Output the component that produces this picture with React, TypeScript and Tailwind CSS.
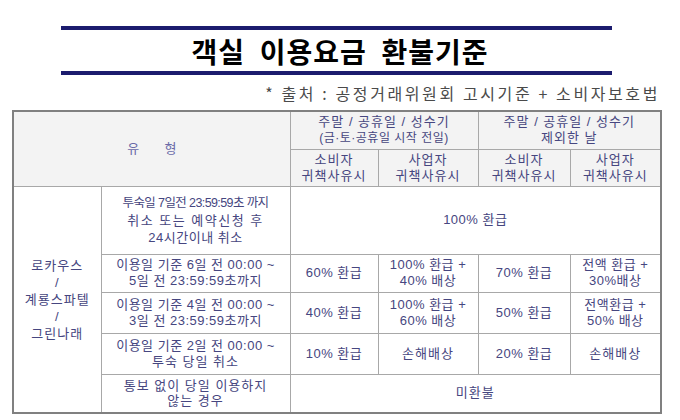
import React from "react";

const font = { fontFamily: '"Noto Sans CJK KR", "Noto Sans", sans-serif' };
const tableFont = { fontFamily: '"Liberation Sans", "Noto Sans CJK KR", sans-serif' };

const td = "border border-[#a8a8a8] text-center align-middle p-0";

export default function App() {
  return (
    <div className="w-[680px] h-[420px] bg-white overflow-hidden text-[#464680]" style={font}>
      <div className="pt-[26px]">
        <div className="ml-[61px] w-[551px] h-[4px] bg-[#1c1c6e]" />
        <div className="h-[41px] flex items-center justify-center text-black text-[28px] font-bold tracking-[1px] leading-none">
          객실&nbsp; 이용요금&nbsp; 환불기준
        </div>
        <div className="ml-[61px] w-[551px] h-[4px] bg-[#1c1c6e]" />
        <div className="h-[35px] flex items-center justify-end pr-[20px] text-[16px] text-[#4a4a4a] tracking-[2.6px]">
          *&nbsp;출처&nbsp;:&nbsp;공정거래위원회&nbsp;고시기준&nbsp;+&nbsp;소비자보호법
        </div>
      </div>
      <table
        className="ml-[12px] w-[648px] border-collapse border-2 border-[#808080] text-[13px] leading-[16px] table-fixed"
        style={tableFont}
      >
        <colgroup>
          <col className="w-[88px]" />
          <col className="w-[189px]" />
          <col className="w-[88px]" />
          <col className="w-[100px]" />
          <col className="w-[92px]" />
          <col className="w-[91px]" />
        </colgroup>
        <tbody>
          <tr className="h-[38px] bg-[#f3f3f3]">
            <td colSpan={2} rowSpan={2} className={`${td} text-[13px] text-[#6a6aa8]`}>
              유&nbsp;&nbsp;&nbsp;&nbsp;&nbsp;&nbsp;&nbsp;형
            </td>
            <td colSpan={2} className={td}>
              <div className="text-[13px] tracking-[1px]">주말 / 공휴일 / 성수기</div>
              <div className="text-[12px] tracking-[0.5px]">(금·토·공휴일 시작 전일)</div>
            </td>
            <td colSpan={2} className={td}>
              <div className="text-[13px] tracking-[1px]">주말 / 공휴일 / 성수기</div>
              <div className="text-[13px] tracking-[1px]">제외한 날</div>
            </td>
          </tr>
          <tr className="h-[37px] bg-[#f3f3f3] text-[13px] tracking-[1px]">
            <td className={td}>소비자<br />귀책사유시</td>
            <td className={td}>사업자<br />귀책사유시</td>
            <td className={td}>소비자<br />귀책사유시</td>
            <td className={td}>사업자<br />귀책사유시</td>
          </tr>
          <tr className="h-[68px]">
            <td rowSpan={5} className={`${td} text-[13px] leading-[17px] tracking-[1px]`}>
              로카우스<br />/<br />계룡스파텔<br />/<br />그린나래
            </td>
            <td className={`${td} leading-[17px]`}>
              <div className="tracking-[-0.6px] text-[12.5px]">투숙일 7일전 23:59:59초 까지</div>
              <div className="tracking-[1.5px]">취소 또는 예약신청 후</div>
              <div className="tracking-[0.5px]">24시간이내 취소</div>
            </td>
            <td colSpan={4} className={`${td} tracking-[0.5px]`}>100% 환급</td>
          </tr>
          <tr className="h-[38px]">
            <td className={td}>
              <div className="tracking-[0.5px]">이용일 기준 6일 전 00:00 ~</div>
              <div className="tracking-[0.5px]">5일 전 23:59:59초까지</div>
            </td>
            <td className={`${td} tracking-[0.5px]`}>60% 환급</td>
            <td className={`${td} tracking-[0.5px]`}>100% 환급 +<br />40% 배상</td>
            <td className={`${td} tracking-[0.5px]`}>70% 환급</td>
            <td className={`${td} tracking-[0.5px]`}>전액 환급 +<br />30%배상</td>
          </tr>
          <tr className="h-[41px]">
            <td className={td}>
              <div className="tracking-[0.5px]">이용일 기준 4일 전 00:00 ~</div>
              <div className="tracking-[0.5px]">3일 전 23:59:59초까지</div>
            </td>
            <td className={`${td} tracking-[0.5px]`}>40% 환급</td>
            <td className={`${td} tracking-[0.5px]`}>100% 환급 +<br />60% 배상</td>
            <td className={`${td} tracking-[0.5px]`}>50% 환급</td>
            <td className={`${td} tracking-[0.5px]`}>전액환급 +<br />50% 배상</td>
          </tr>
          <tr className="h-[41px]">
            <td className={td}>
              <div className="tracking-[0.5px]">이용일 기준 2일 전 00:00 ~</div>
              <div className="tracking-[1px]">투숙 당일 취소</div>
            </td>
            <td className={`${td} tracking-[0.5px]`}>10% 환급</td>
            <td className={`${td} tracking-[1px]`}>손해배상</td>
            <td className={`${td} tracking-[0.5px]`}>20% 환급</td>
            <td className={`${td} tracking-[1px]`}>손해배상</td>
          </tr>
          <tr className="h-[39px]">
            <td className={`${td} leading-[15px]`}>
              <div className="tracking-[1px]">통보 없이 당일 이용하지</div>
              <div className="tracking-[1px]">않는 경우</div>
            </td>
            <td colSpan={4} className={`${td} tracking-[1px]`}>미환불</td>
          </tr>
        </tbody>
      </table>
    </div>
  );
}
